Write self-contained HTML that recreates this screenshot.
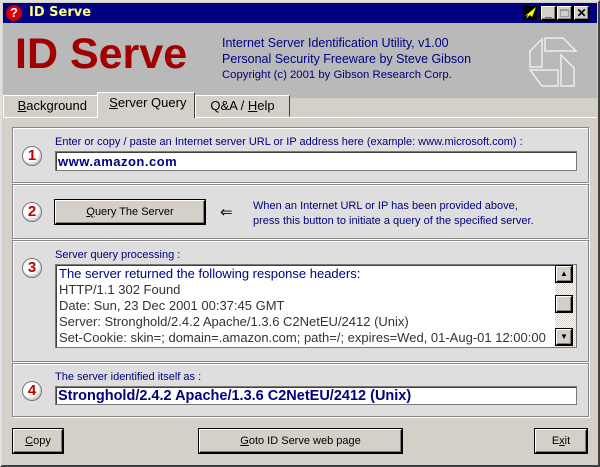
<!DOCTYPE html><html><head><style>
*{margin:0;padding:0;box-sizing:border-box}
body{width:600px;height:467px;background:#d4d0c8;position:relative;overflow:hidden;font-family:"Liberation Sans",Arial,sans-serif;font-size:12px}
.a{position:absolute}
.win{left:0;top:0;width:600px;height:467px;border:2px solid;border-color:#e0e0e0 #404040 #404040 #e0e0e0}
.title{left:3px;top:3px;width:594px;height:20px;background:#000080}
.hdr{left:3px;top:23px;width:594px;height:75px;background:#b9b9b9}
.panel{left:12px;width:577px;background:#dedede;border:1px solid #888;box-shadow:inset 1px 1px 0 #fff,1px 1px 0 #fff}
.lbl{color:#000080;font-size:11px}
.field{background:#fff;border:1px solid #7a7a7a;box-shadow:inset 1px 1px 0 #404040}
.btn{background:#d4d0c8;border:1px solid;border-color:#fff #000 #000 #fff;box-shadow:inset -1px -1px 0 #808080,0 0 0 1px #000;text-align:center;font-size:12px;color:#000}
.num{width:20px;height:20px;border-radius:50%;background:radial-gradient(circle at 40% 35%,#fff 50%,#bbb 80%,#888);border:1px solid #777;color:#c00000;font-weight:bold;font-size:15px;text-align:center;line-height:18px}
.tab{height:22px;background:#d4d0c8;border:1px solid;border-color:#fff #404040 transparent #fff;text-align:center;font-size:13px;line-height:20px}
</style></head><body>
<div class="a win"></div>
<div class="a title"></div>
<div class="a" style="left:6px;top:5px;width:16px;height:16px;border-radius:50%;background:#d00000;color:#fff;font-weight:bold;font-size:13px;text-align:center;line-height:16px">?</div>
<div class="a" style="left:29px;top:5px;color:#ffff80;font-weight:bold;font-size:13px;line-height:16px;font-family:'DejaVu Sans',sans-serif">ID Serve</div>
<div class="a" style="left:522px;top:5px;width:16px;height:16px;background:#000;border:1px solid #000080"><svg width="14" height="14"><path d="M13 1 L2 10 L5 9 L3 13 L7 9 L9 11 Z" fill="#ff0"/></svg></div>
<div class="a btn" style="left:541px;top:6px;width:15px;height:14px;font-weight:bold;line-height:10px;font-size:12px">_</div>
<div class="a btn" style="left:557px;top:6px;width:15px;height:14px"><div style="margin:2px auto;width:9px;height:8px;border:1px solid #999;border-top-width:2px"></div></div>
<div class="a btn" style="left:574px;top:6px;width:15px;height:14px;font-weight:bold;line-height:13px;font-size:12px">✕</div>
<div class="a hdr"></div>
<div class="a" style="left:15px;top:30px;color:#a00000;font-weight:bold;font-size:43px">ID Serve</div>
<div class="a" style="left:222px;top:35px;color:#000080;font-size:13px;line-height:16px;transform:scaleX(.96);transform-origin:left">Internet Server Identification Utility, v1.00<br>Personal Security Freeware by Steve Gibson</div>
<div class="a" style="left:222px;top:69px;color:#000080;font-size:11px;transform:scaleX(1.03);transform-origin:left">Copyright (c) 2001 by Gibson Research Corp.</div>
<svg class="a" style="left:526px;top:36px" width="52" height="52" fill="none" stroke="#eee" stroke-width="1.5"><path d="M16 3 L16 31 L4 31 L4 15 Z M19 2 L37 2 L50 15 L19 15 Z M35 19 L48 32 L48 50 L35 50 Z M4 34 L32 34 L32 50 L16 50 Z"/></svg>
<div class="a" style="left:3px;top:117px;width:594px;height:1px;background:#fff"></div>
<div class="a tab" style="left:3px;top:95px;width:95px">&nbsp;<u>B</u>ackground</div>
<div class="a tab" style="left:97px;top:92px;width:98px;height:26px;border-bottom:none">&nbsp;<u>S</u>erver Query</div>
<div class="a tab" style="left:195px;top:95px;width:95px"><span>Q&amp;A / <u>H</u>elp</span></div>

<div class="a panel" style="top:127px;height:56px"></div>
<div class="a lbl" style="left:55px;top:136px">Enter or copy / paste an Internet server URL or IP address here (example: www.microsoft.com) :</div>
<div class="a num" style="left:22px;top:146px">1</div>
<div class="a field" style="left:55px;top:151px;width:522px;height:20px;color:#000080;font-weight:bold;font-size:13px;padding:2px 2px;letter-spacing:.5px">www.amazon.com</div>

<div class="a panel" style="top:184px;height:55px"></div>
<div class="a num" style="left:22px;top:202px">2</div>
<div class="a btn" style="left:55px;top:200px;width:150px;height:24px;line-height:22px;font-size:11px"><u>Q</u>uery The Server</div>
<div class="a" style="left:220px;top:203px;font-size:15px">⇐</div>
<div class="a lbl" style="left:253px;top:199px;line-height:15px">When an Internet URL or IP has been provided above,<br>press this button to initiate a query of the specified server.</div>

<div class="a panel" style="top:240px;height:122px"></div>
<div class="a lbl" style="left:55px;top:249px">Server query processing :</div>
<div class="a num" style="left:22px;top:258px">3</div>
<div class="a field" style="left:55px;top:264px;width:522px;height:84px;overflow:hidden;font-size:13px;line-height:16px;padding:1px 3px;color:#333;white-space:nowrap"><span style="color:#000080">The server returned the following response headers:</span><br>HTTP/1.1 302 Found<br>Date: Sun, 23 Dec 2001 00:37:45 GMT<br>Server: Stronghold/2.4.2 Apache/1.3.6 C2NetEU/2412 (Unix)<br>Set-Cookie: skin=; domain=.amazon.com; path=/; expires=Wed, 01-Aug-01 12:00:00</div>
<div class="a" style="left:555px;top:265px;width:21px;height:82px;background:repeating-conic-gradient(#fff 0 25%,#d4d0c8 0 50%) 0 0/2px 2px"></div>
<div class="a btn" style="left:556px;top:266px;width:16px;height:16px;font-size:8px;line-height:14px">▲</div>
<div class="a btn" style="left:556px;top:296px;width:16px;height:16px"></div>
<div class="a btn" style="left:556px;top:329px;width:16px;height:16px;font-size:8px;line-height:14px">▼</div>

<div class="a panel" style="top:363px;height:54px"></div>
<div class="a lbl" style="left:55px;top:371px">The server identified itself as :</div>
<div class="a num" style="left:22px;top:381px">4</div>
<div class="a field" style="left:55px;top:386px;width:522px;height:19px;color:#000080;font-weight:bold;font-size:14.5px;line-height:16px;padding:1px 2px;white-space:nowrap">Stronghold/2.4.2 Apache/1.3.6 C2NetEU/2412 (Unix)</div>

<div class="a btn" style="left:13px;top:429px;width:50px;height:24px;line-height:22px;font-size:11px"><u>C</u>opy</div>
<div class="a btn" style="left:199px;top:429px;width:203px;height:24px;line-height:22px;font-size:11px"><u>G</u>oto ID Serve web page</div>
<div class="a btn" style="left:535px;top:429px;width:52px;height:24px;line-height:22px;font-size:11px">E<u>x</u>it</div>
</body></html>
